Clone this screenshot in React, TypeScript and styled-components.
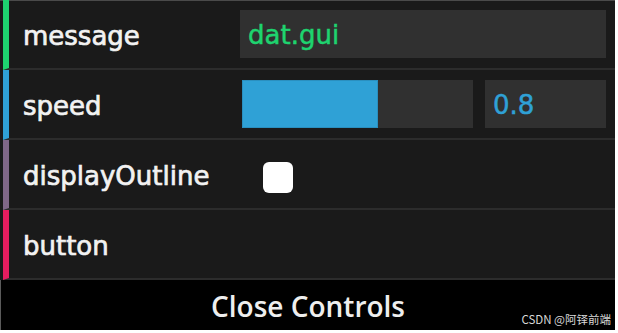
import React from "react";
import styled, { createGlobalStyle } from "styled-components";

const Global = createGlobalStyle`
  html, body {
    margin: 0;
    padding: 0;
    background: #ffffff;
  }
`;

const controls = {
  message: "dat.gui",
  speed: 0.8,
  speedMax: 1.36,
  displayOutline: false,
};

export default function App() {
  const fill = (controls.speed / controls.speedMax) * 100;
  return (
    <>
      <Global />
      <Panel>
        <Row color="#1ed36f">
          <Label>message</Label>
          <Control>
            <TextBox>{controls.message}</TextBox>
          </Control>
        </Row>
        <Row color="#2fa1d6">
          <Label>speed</Label>
          <Control>
            <Slider>
              <SliderFill style={{ width: `${fill}%` }} />
            </Slider>
            <NumberBox>{controls.speed}</NumberBox>
          </Control>
        </Row>
        <Row color="#806787">
          <Label>displayOutline</Label>
          <Control>
            <Checkbox />
          </Control>
        </Row>
        <Row color="#e61d5f">
          <Label>button</Label>
        </Row>
        <CloseBar>
          Close Controls
          <Watermark>CSDN @阿铎前端</Watermark>
        </CloseBar>
      </Panel>
    </>
  );
}

const Panel = styled.div`
  width: 615px;
  height: 330px;
  background: #1a1a1a;
  box-shadow: inset 0 1px 0 #4a4a4a;
  display: flex;
  flex-direction: column;
  font-family: "DejaVu Sans", sans-serif;
  color: #eeeeee;
`;

const Row = styled.div<{ color: string }>`
  height: 70px;
  flex-shrink: 0;
  box-sizing: border-box;
  display: flex;
  align-items: center;
  margin-left: 3px;
  border-left: 6px solid ${(p) => p.color};
  border-bottom: 2px solid #2c2c2c;
  padding-right: 9px;
`;

const Label = styled.div`
  width: 231px;
  flex-shrink: 0;
  padding-left: 14px;
  padding-top: 3px;
  box-sizing: border-box;
  font-size: 26px;
  line-height: 30px;
  color: #f2f2f2;
  -webkit-text-stroke: 0.7px #f2f2f2;
`;

const Control = styled.div`
  flex: 1;
  display: flex;
  align-items: center;
  gap: 12px;
`;

const TextBox = styled.div`
  flex: 1;
  height: 48px;
  background: #303030;
  color: #1ed36f;
  font-size: 26px;
  line-height: 50px;
  padding-left: 8px;
  -webkit-text-stroke: 0.5px #1ed36f;
`;

const Slider = styled.div`
  width: 231px;
  height: 48px;
  margin-left: 2px;
  background: #303030;
  display: flex;
`;

const SliderFill = styled.div`
  height: 100%;
  background: #2fa1d6;
  box-shadow: inset 0 0 0 1px #2a8fbf;
`;

const NumberBox = styled.div`
  flex: 1;
  height: 48px;
  background: #303030;
  color: #2fa1d6;
  font-size: 26px;
  line-height: 50px;
  padding-left: 8px;
  -webkit-text-stroke: 0.5px #2fa1d6;
`;

const Checkbox = styled.div`
  width: 30px;
  height: 31px;
  margin-left: 23px;
  margin-top: 7px;
  border-radius: 6px;
  background: #ffffff;
`;

const CloseBar = styled.div`
  position: relative;
  flex: 1;
  background: #000000;
  border-left: 1px solid #5a5a5a;
  display: flex;
  align-items: center;
  justify-content: center;
  font-family: "Open Sans", sans-serif;
  font-weight: 600;
  font-size: 28px;
  color: #eeeeee;
  padding-top: 1px;
`;

const Watermark = styled.span`
  position: absolute;
  right: 4px;
  bottom: 3px;
  font-family: "Noto Sans CJK SC", sans-serif;
  font-weight: normal;
  font-size: 11.5px;
  color: #d8d8d8;
`;
